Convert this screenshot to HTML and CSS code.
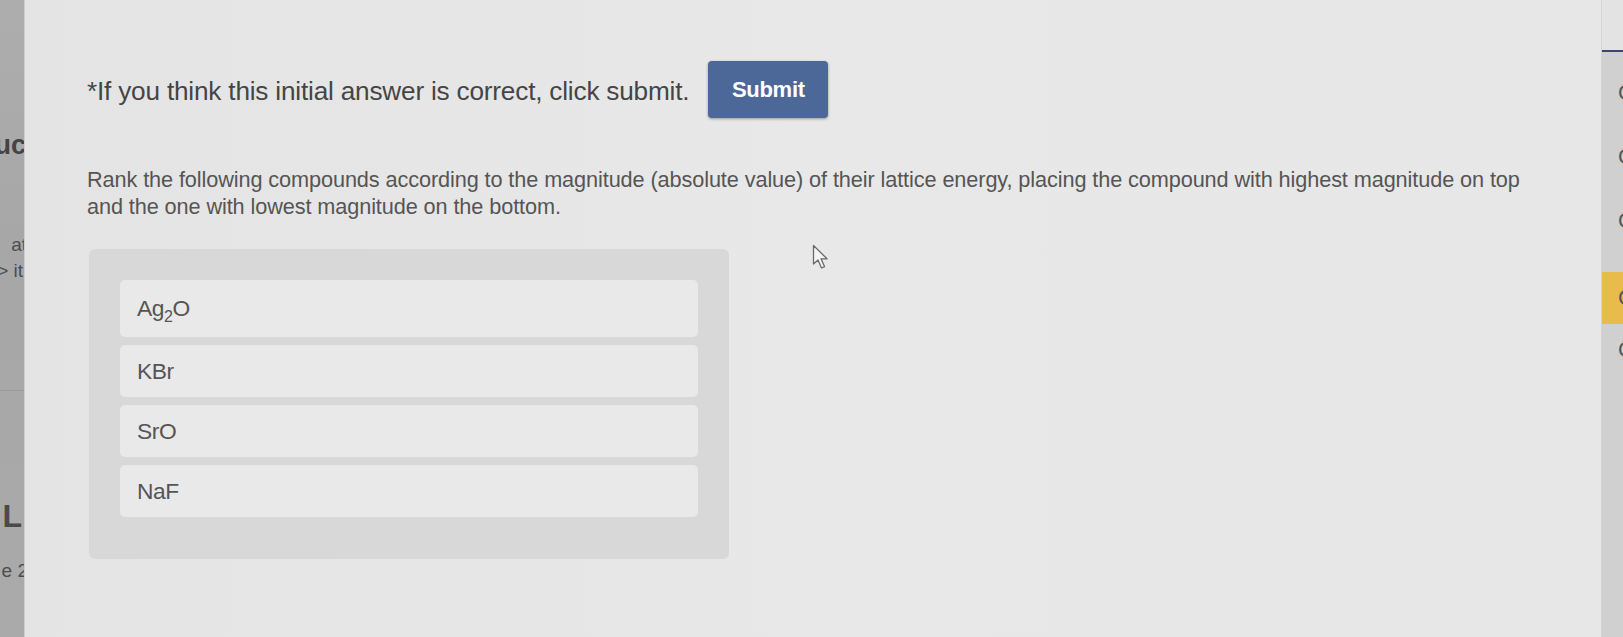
FILE: index.html
```html
<!DOCTYPE html>
<html>
<head>
<meta charset="utf-8">
<link rel="stylesheet" href="styles.css">
</head>
<body>
<div class="page">
  <aside class="left-strip">
    <div class="ls-uc">uc</div>
    <div class="ls-small ls-at">at</div>
    <div class="ls-small ls-it">&gt; it</div>
    <div class="ls-rule"></div>
    <div class="ls-L">L</div>
    <div class="ls-small ls-e">e 2</div>
  </aside>
  <main class="main">
    <div class="submit-row">
      <span class="hint">*If you think this initial answer is correct, click submit.</span>
      <button class="submit-btn">Submit</button>
    </div>
    <p class="question">Rank the following compounds according to the magnitude (absolute value) of their lattice energy, placing the compound with highest magnitude on top and the one with lowest magnitude on the bottom.</p>
    <div class="rank-box">
      <div class="rank-item">Ag<sub>2</sub>O</div>
      <div class="rank-item">KBr</div>
      <div class="rank-item">SrO</div>
      <div class="rank-item">NaF</div>
    </div>
    <svg class="cursor" width="18" height="26" viewBox="0 0 18 26">
      <path d="M1.5 1.5 L1.5 20 L6 16 L9.5 24 L12.5 22.6 L9 14.8 L15 14.8 Z" fill="#f4f4f4" stroke="#6a6a6a" stroke-width="1.3" stroke-linejoin="round"/>
    </svg>
  </main>
  <aside class="right-panel">
    <div class="rp-top"></div>
    <div class="rp-list">
      <div class="rp-row">C</div>
      <div class="rp-row">C</div>
      <div class="rp-row">C</div>
      <div class="rp-row rp-active">C</div>
      <div class="rp-row rp-last">C</div>
    </div>
  </aside>
</div>
</body>
</html>
```

FILE: styles.css
```css
* { box-sizing: border-box; }

html, body {
  margin: 0;
  padding: 0;
  width: 1623px;
  height: 637px;
  overflow: hidden;
  font-family: "Liberation Sans", Arial, Helvetica, sans-serif;
}

.page {
  display: flex;
  width: 1623px;
  height: 637px;
  background: #e6e6e6;
}

/* left strip */
.left-strip {
  width: 25px;
  flex: none;
  background: linear-gradient(#adadad, #a7a7a7 40%, #aaaaaa);
  border-right: 1px solid #cfcfcf;
  overflow: hidden;
  display: flex;
  flex-direction: column;
  align-items: flex-end;
  color: #4a4a4a;
  white-space: nowrap;
}
.ls-uc {
  margin-top: 130px;
  font-size: 27px;
  font-weight: bold;
  color: #444;
  line-height: 30px;
  margin-right: -2px;
}
.ls-small {
  font-size: 19px;
  line-height: 26px;
  color: #4d4d4d;
}
.ls-at { margin-top: 72px; margin-right: -3px; }
.ls-it { margin-right: 1px; }
.ls-rule {
  width: 100%;
  height: 1px;
  background: #9a9a9a;
  margin-top: 106px;
}
.ls-L {
  margin-top: 108px;
  font-size: 32px;
  font-weight: bold;
  line-height: 34px;
  color: #4a4a4a;
  margin-right: 2px;
}
.ls-e { margin-top: 25px; margin-right: -4px; }

/* main content */
.main {
  position: relative;
  flex: 1;
  padding: 61px 60px 0 62px;
  background: linear-gradient(90deg, #e4e4e4, #e8e8e8 50%, #e7e7e7);
}

.submit-row {
  display: flex;
  align-items: center;
  gap: 19px;
}
.hint {
  font-size: 26.2px;
  color: #454545;
  letter-spacing: -0.2px;
  position: relative;
  top: 2px;
}
.submit-btn {
  width: 120px;
  height: 57px;
  border: none;
  border-radius: 4px;
  background: #4c6898;
  color: #fff;
  font-family: "Liberation Sans", Arial, sans-serif;
  font-size: 22px;
  font-weight: bold;
  box-shadow: 0 1px 3px rgba(0,0,0,0.35);
  letter-spacing: -0.3px;
}

.question {
  margin: 48px 0 0 0;
  max-width: 1460px;
  font-size: 21.7px;
  line-height: 27px;
  color: #555;
  letter-spacing: -0.1px;
}

.rank-box {
  margin: 29px 0 0 2px;
  width: 640px;
  padding: 31px 31px 42px 31px;
  background: #d8d8d8;
  border-radius: 6px;
  display: flex;
  flex-direction: column;
  gap: 8px;
}
.rank-item {
  background: #e9e9e9;
  border-radius: 5px;
  padding: 14px 17px;
  height: 52px;
  font-size: 22.8px;
  line-height: 24px;
  color: #555;
  letter-spacing: -0.4px;
}
.rank-item sub {
  font-size: 16px;
  line-height: 0;
}
.rank-item:first-child { height: 57px; padding-top: 16px; }

.cursor {
  position: absolute;
  left: 787px;
  top: 244px;
}

/* right panel */
.right-panel {
  width: 22px;
  flex: none;
  display: flex;
  flex-direction: column;
  overflow: hidden;
  border-left: 1px solid #d4d4d4;
}
.rp-top {
  height: 52px;
  background: #e3e3e3;
  border-bottom: 2px solid #3d4470;
}
.rp-list {
  flex: 1;
  background: #d0d0d0;
  padding-top: 9px;
  display: flex;
  flex-direction: column;
}
.rp-row {
  height: 64px;
  display: flex;
  align-items: center;
  padding-left: 16px;
  font-size: 22px;
  color: #555;
  white-space: nowrap;
}
.rp-active {
  margin-top: 19px;
  height: 52px;
  background: #e8bb4c;
}
.rp-last { height: 52px; }
```
